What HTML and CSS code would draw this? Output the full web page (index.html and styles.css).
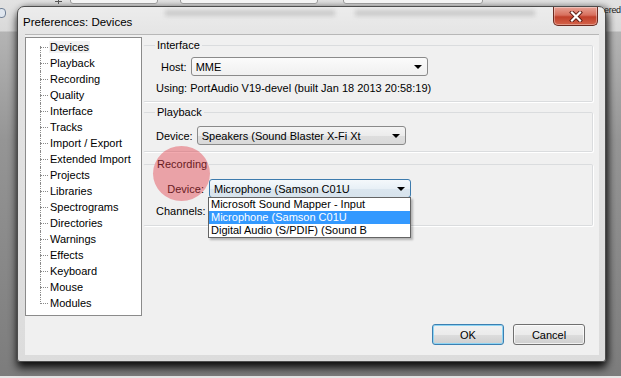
FILE: index.html
```html
<!DOCTYPE html>
<html lang="en">
<head>
    <meta charset="UTF-8">
    <title>Preferences: Devices</title>
    <link rel="stylesheet" href="styles.css">
</head>
<body>
    <div class="desk">
        <div class="toolbar">
            <span class="tb-plus"></span>
            <span class="tb-box tb-box1"></span>
            <span class="tb-box tb-box2"></span>
            <span class="tb-box tb-box3"></span>
        </div>
        <span class="side-icon"></span>
        <span class="peek">ered</span>

        <div class="dialog">
            <div class="titlebar">
                <span class="glass glass1"></span>
                <span class="glass glass2"></span>
                <span class="title">Preferences: Devices</span>
                <span class="close">
                    <svg width="14" height="11" viewBox="0 0 14 11">
                        <path d="M3 1.5 L11 9.5 M11 1.5 L3 9.5" stroke="#5a1a12" stroke-width="4" stroke-linecap="square"/>
                        <path d="M3 1.5 L11 9.5 M11 1.5 L3 9.5" stroke="#fff" stroke-width="2.2" stroke-linecap="square"/>
                    </svg>
                </span>
            </div>

            <div class="client">
                <div class="main">
                    <ul class="tree">
                        <li class="selected"><span>Devices</span></li>
                        <li><span>Playback</span></li>
                        <li><span>Recording</span></li>
                        <li><span>Quality</span></li>
                        <li><span>Interface</span></li>
                        <li><span>Tracks</span></li>
                        <li><span>Import / Export</span></li>
                        <li><span>Extended Import</span></li>
                        <li><span>Projects</span></li>
                        <li><span>Libraries</span></li>
                        <li><span>Spectrograms</span></li>
                        <li><span>Directories</span></li>
                        <li><span>Warnings</span></li>
                        <li><span>Effects</span></li>
                        <li><span>Keyboard</span></li>
                        <li><span>Mouse</span></li>
                        <li><span>Modules</span></li>
                    </ul>

                    <div class="page">
                        <fieldset class="group group-interface">
                            <legend>Interface</legend>
                            <div class="row row-host">
                                <span class="label">Host:</span>
                                <div class="combo combo-host"><span>MME</span><i class="arrow"></i></div>
                            </div>
                            <div class="info">Using: PortAudio V19-devel (built Jan 18 2013 20:58:19)</div>
                        </fieldset>

                        <fieldset class="group group-playback">
                            <legend>Playback</legend>
                            <div class="row">
                                <span class="label">Device:</span>
                                <div class="combo combo-play"><span>Speakers (Sound Blaster X-Fi Xt</span><i class="arrow"></i></div>
                            </div>
                        </fieldset>

                        <fieldset class="group group-recording">
                            <legend>Recording</legend>
                            <div class="row">
                                <span class="label label-right">Device:</span>
                                <div class="combo combo-rec focused">
                                    <span>Microphone (Samson C01U</span><i class="arrow"></i>
                                    <ul class="dropdown">
                                        <li>Microsoft Sound Mapper - Input</li>
                                        <li class="active">Microphone (Samson C01U</li>
                                        <li>Digital Audio (S/PDIF) (Sound B</li>
                                    </ul>
                                </div>
                            </div>
                            <div class="row row-channels">
                                <span class="label">Channels:</span>
                            </div>
                        </fieldset>

                        <span class="highlight"></span>
                    </div>
                </div>

                <div class="buttons">
                    <button class="btn btn-default">OK</button>
                    <button class="btn">Cancel</button>
                </div>
            </div>
        </div>
    </div>
</body>
</html>
```

FILE: styles.css
```css
* {
    box-sizing: border-box;
}
body {
    margin: 0;
    font-family: "Liberation Sans", Arial, sans-serif;
    font-size: 11px;
    color: #000;
}
.desk {
    position: relative;
    width: 621px;
    height: 378px;
    overflow: hidden;
    padding: 6px 0 0 17px;
    background:
        linear-gradient(#e6e6e6, #e6e6e6) 0 376px / 100% 2px no-repeat,
        linear-gradient(to bottom, #e2e2e2 0, #d9d9d9 31px, #b4b4b4 32px, #959595 140px, #7c7c7c 100%);
}
.toolbar {
    position: absolute;
    left: 0;
    top: 0;
    width: 100%;
    height: 6px;
}
.tb-plus {
    position: absolute;
    left: 55px;
    top: 0;
    width: 7px;
    height: 4px;
    background:
        linear-gradient(#555, #555) 3px 0 / 1px 4px no-repeat,
        linear-gradient(#555, #555) 0 1px / 7px 1px no-repeat;
}
.tb-box {
    position: absolute;
    top: -6px;
    height: 10px;
    border: 1px solid #9a9a9a;
    border-radius: 3px;
    background: #f4f4f4;
}
.tb-box1 { left: 70px; width: 88px; }
.tb-box2 { left: 180px; width: 138px; }
.tb-box3 { left: 343px; width: 140px; }
.side-icon {
    position: absolute;
    left: -3px;
    top: 8px;
    width: 9px;
    height: 10px;
    border: 1px solid #6f7f95;
    border-radius: 4px;
    background: #dfe6ef;
}
.peek {
    position: absolute;
    left: 604px;
    top: 5px;
    font-size: 9px;
    letter-spacing: -0.3px;
    color: #222;
}

/* window */
.dialog {
    width: 589px;
    height: 356px;
    border: 1px solid #4d4d4d;
    border-radius: 7px 7px 3px 3px;
    background: linear-gradient(to bottom, #ececec, #e4e4e4 30px, #dcdcdc);
    padding: 0 6px 6px 7px;
    box-shadow: 0 6px 9px rgba(0, 0, 0, 0.85), 3px 0 6px rgba(0, 0, 0, 0.4);
    display: flex;
    flex-direction: column;
}
.titlebar {
    position: relative;
    height: 27px;
    display: flex;
    justify-content: space-between;
    align-items: flex-start;
}
.glass {
    position: absolute;
    top: 3px;
    height: 6px;
    background: rgba(60, 60, 60, 0.18);
    filter: blur(2px);
}
.glass1 { left: 140px; width: 170px; }
.glass2 { left: 330px; width: 180px; }
.title {
    position: relative;
    margin: 8px 0 0 -2px;
    font-size: 11.5px;
    line-height: 14px;
    color: #000;
}
.close {
    position: relative;
    width: 45px;
    height: 19px;
    margin: 0 1px 0 0;
    border: 1px solid #6c2a20;
    border-top: none;
    border-radius: 0 0 5px 5px;
    background: linear-gradient(to bottom, #e8a295 0, #d8705e 45%, #c1402b 55%, #d4634a 100%);
    display: flex;
    align-items: center;
    justify-content: center;
    box-shadow: inset 0 0 0 1px rgba(255, 255, 255, 0.35);
}
.client {
    flex: 1;
    background: #f0f0f0;
    border-top: 1px solid #b7b7b7;
    display: flex;
    flex-direction: column;
}
.main {
    display: flex;
    padding-top: 2px;
}

/* tree */
.tree {
    list-style: none;
    margin: 0;
    padding: 1px 0 0;
    width: 117px;
    height: 279px;
    border: 1px solid #8b8b8b;
    background: #fff;
}
.tree li {
    position: relative;
    height: 16px;
    line-height: 16px;
    padding-left: 23px;
}
.tree li::before {
    content: "";
    position: absolute;
    left: 14px;
    top: 8px;
    width: 8px;
    border-top: 1px dotted #8a8a8a;
}
.tree li::after {
    content: "";
    position: absolute;
    left: 14px;
    top: 0;
    height: 16px;
    border-left: 1px dotted #8a8a8a;
}
.tree li:first-child::after {
    top: 7px;
    height: 9px;
}
.tree li:last-child::after {
    height: 9px;
}
.tree li span {
    padding: 0 1px;
}
.tree li.selected span {
    background: #f2f2f2;
}

/* settings page */
.page {
    position: relative;
    flex: 1;
    padding: 0 6px 0 1px;
}
.group {
    margin: 0;
    padding: 0 6px 0 12px;
    border: 1px solid #dadcde;
    border-left-color: transparent;
    border-radius: 2px;
    box-shadow: 1px 1px 0 #fff;
}
.group legend {
    padding: 0 2px;
    margin-left: -1px;
    line-height: 13px;
}
.group-interface {
    margin-top: 2px;
    height: 63px;
    padding-top: 5px;
}
.group-playback {
    margin-top: 4px;
    height: 46px;
    padding-top: 7px;
}
.group-recording {
    margin-top: 6px;
    height: 68px;
    padding-top: 8px;
}
.row {
    display: flex;
    align-items: center;
    height: 19px;
}
.label {
    margin-right: 4px;
}
.row-host .label {
    margin-left: 5px;
}
.label-right {
    width: 48px;
    text-align: right;
    margin-right: 5px;
}
.info {
    margin-top: 6px;
    line-height: 13px;
}
.row-channels {
    margin-top: 6px;
    height: 13px;
}

.combo {
    position: relative;
    height: 19px;
    padding: 0 0 0 4px;
    border: 1px solid #8a8a8a;
    border-radius: 3px;
    background: linear-gradient(to bottom, #f4f4f4 0, #ececec 50%, #dedede 51%, #d9d9d9 100%);
    display: flex;
    align-items: center;
    white-space: nowrap;
}
.combo-host {
    width: 237px;
    background: linear-gradient(to bottom, #fbfbfb, #f0f0f0);
}
.combo-play {
    width: 209px;
}
.combo-rec {
    width: 202px;
}
.combo.focused {
    border-color: #3d7bad;
    background: linear-gradient(to bottom, #f4f8fb 0, #e8f0f6 50%, #dbe6ef 51%, #d7e3ec 100%);
}
.arrow {
    position: absolute;
    right: 5px;
    top: 7px;
    width: 0;
    height: 0;
    border-left: 4px solid transparent;
    border-right: 4px solid transparent;
    border-top: 4px solid #000;
}
.dropdown {
    position: absolute;
    left: -2px;
    top: 17px;
    width: 203px;
    margin: 0;
    padding: 0;
    list-style: none;
    border: 1px solid #646464;
    background: #fff;
    box-shadow: 2px 2px 2px rgba(0, 0, 0, 0.25);
    z-index: 2;
}
.dropdown li {
    height: 13px;
    line-height: 13px;
    padding-left: 2px;
}
.dropdown li.active {
    background: #3399ff;
    color: #fff;
}
.highlight {
    position: absolute;
    left: 11px;
    top: 109px;
    width: 57px;
    height: 55px;
    border-radius: 50%;
    background: rgba(226, 62, 72, 0.44);
    z-index: 3;
}

/* buttons */
.buttons {
    display: flex;
    justify-content: flex-end;
    gap: 9px;
    padding: 8px 14px 0 0;
}
.btn {
    width: 72px;
    height: 21px;
    font-family: "Liberation Sans", Arial, sans-serif;
    font-size: 11px;
    color: #000;
    border: 1px solid #707070;
    border-radius: 3px;
    background: linear-gradient(to bottom, #f2f2f2 0, #ebebeb 50%, #dddddd 51%, #cfcfcf 100%);
    box-shadow: inset 0 0 0 1px rgba(255, 255, 255, 0.7);
    padding: 0;
}
.btn-default {
    border-color: #3c7fb1;
    box-shadow: inset 0 0 0 1px #8ed4f3;
}
```
